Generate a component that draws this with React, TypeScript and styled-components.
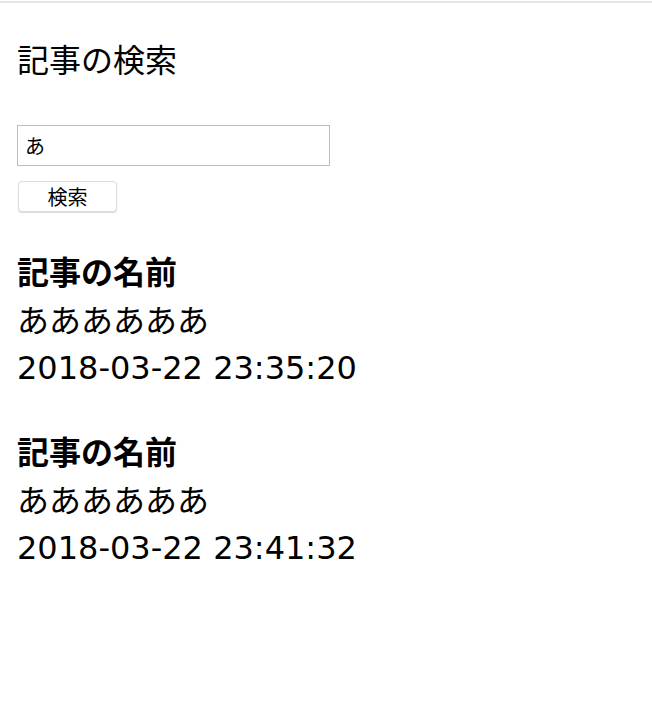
import React, { useState } from "react";
import styled, { createGlobalStyle } from "styled-components";

const GlobalStyle = createGlobalStyle`
  html, body {
    margin: 0;
    padding: 0;
    background: #ffffff;
  }
  body {
    font-family: "Noto Sans CJK JP", "Noto Sans", sans-serif;
    color: #000000;
  }
`;

type Post = {
  title: string;
  body: string;
  createdAt: string;
};

const posts: Post[] = [
  { title: "記事の名前", body: "ああああああ", createdAt: "2018-03-22 23:35:20" },
  { title: "記事の名前", body: "ああああああ", createdAt: "2018-03-22 23:41:32" },
];

export default function App() {
  const [keyword, setKeyword] = useState("あ");

  return (
    <>
      <GlobalStyle />
      <TopEdge />
      <Page>
        <Heading>記事の検索</Heading>
        <SearchForm onSubmit={(e) => e.preventDefault()}>
          <SearchInput
            type="text"
            value={keyword}
            onChange={(e) => setKeyword(e.target.value)}
          />
          <SearchButton type="submit">検索</SearchButton>
        </SearchForm>
        <PostList>
          {posts.map((post) => (
            <PostItem key={post.createdAt}>
              <PostTitle>{post.title}</PostTitle>
              <PostBody>{post.body}</PostBody>
              <PostDate>{post.createdAt}</PostDate>
            </PostItem>
          ))}
        </PostList>
      </Page>
    </>
  );
}

const TopEdge = styled.div`
  height: 2px;
  margin-top: 1px;
  background-color: #e6e6e6;
`;

const Page = styled.main`
  padding: 35px 17px 40px;
`;

const Heading = styled.h1`
  margin: 0;
  font-size: 32px;
  font-weight: 400;
  line-height: 40px;
`;

const SearchForm = styled.form`
  display: flex;
  flex-direction: column;
  align-items: flex-start;
  gap: 15px;
  margin-top: 47px;
`;

const SearchInput = styled.input`
  box-sizing: border-box;
  width: 313px;
  height: 41px;
  margin: 0;
  padding: 0 7px;
  border: 1px solid #bdbdbd;
  border-radius: 0;
  font-family: "Noto Sans CJK JP", sans-serif;
  font-size: 20px;
  color: #000000;
  outline: none;
`;

const SearchButton = styled.button`
  box-sizing: border-box;
  width: 99px;
  height: 31px;
  margin: 0 0 0 1px;
  padding: 0;
  border: 1px solid #dcdcdc;
  border-radius: 4px;
  background: #ffffff;
  box-shadow: 0 1px 1px rgba(0, 0, 0, 0.15);
  font-family: "Noto Sans CJK JP", sans-serif;
  font-size: 20px;
  line-height: 29px;
  color: #000000;
  cursor: pointer;
`;

const PostList = styled.section`
  display: flex;
  flex-direction: column;
  gap: 36px;
  margin-top: 35px;
`;

const PostItem = styled.article`
  display: flex;
  flex-direction: column;
`;

const PostTitle = styled.h3`
  margin: 0;
  font-size: 32px;
  font-weight: 700;
  line-height: 46px;
`;

const PostBody = styled.p`
  margin: 2px 0 0;
  font-size: 32px;
  line-height: 46px;
`;

const PostDate = styled.time`
  margin-top: 4px;
  font-family: "DejaVu Sans", "Noto Sans CJK JP", sans-serif;
  font-size: 32px;
  line-height: 46px;
`;
